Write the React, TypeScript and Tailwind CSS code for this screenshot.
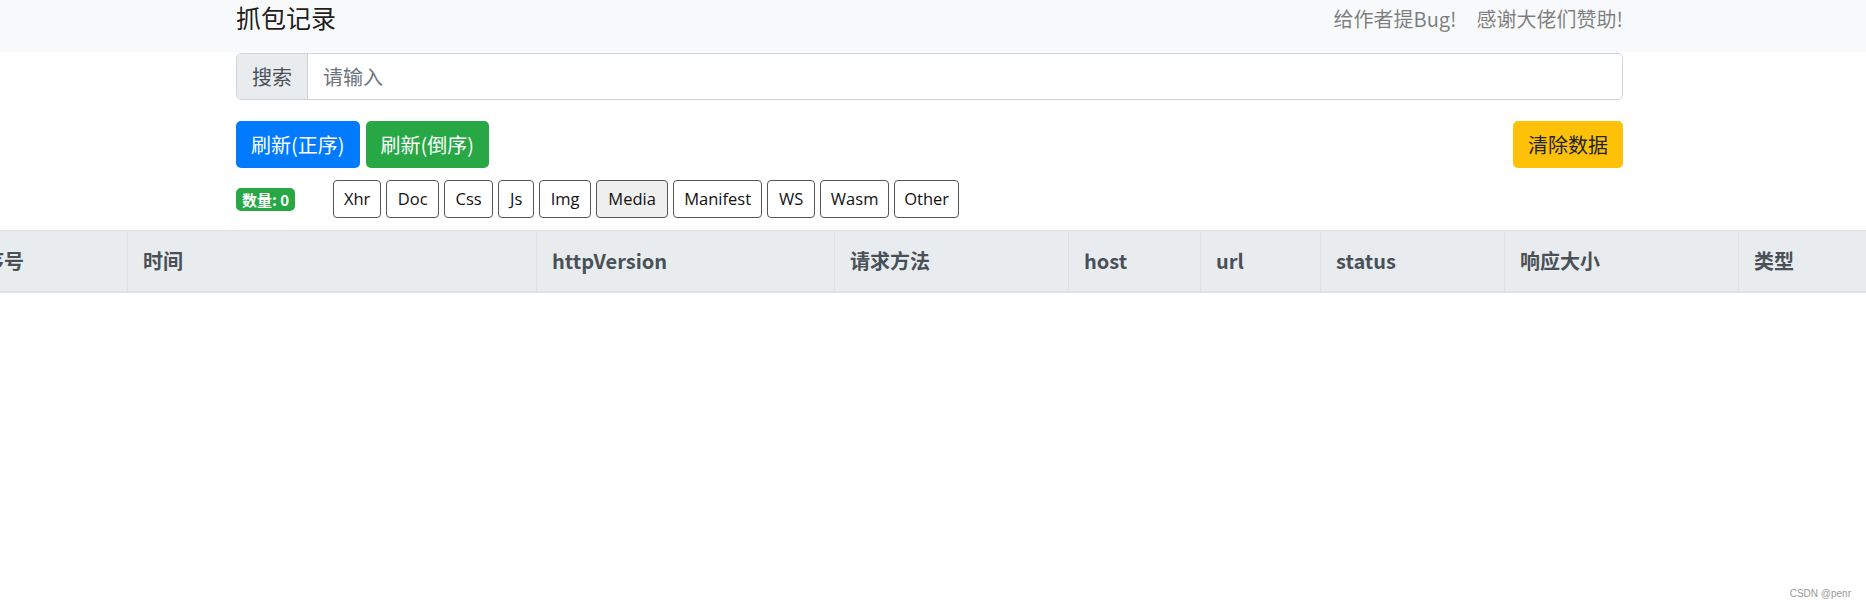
const filters = [
    { label: 'Xhr', w: 'w-[48px]', active: false },
    { label: 'Doc', w: 'w-[53px]', active: false },
    { label: 'Css', w: 'w-[49px]', active: false },
    { label: 'Js', w: 'w-[36px]', active: false },
    { label: 'Img', w: 'w-[52px]', active: false },
    { label: 'Media', w: 'w-[72px]', active: true },
    { label: 'Manifest', w: 'w-[89px]', active: false },
    { label: 'WS', w: 'w-[48px]', active: false },
    { label: 'Wasm', w: 'w-[69px]', active: false },
    { label: 'Other', w: 'w-[65px]', active: false }
];

const columns = [
    { label: '序号', w: 'w-[159px]' },
    { label: '时间', w: 'w-[409px]' },
    { label: 'httpVersion', w: 'w-[298px]' },
    { label: '请求方法', w: 'w-[234px]' },
    { label: 'host', w: 'w-[132px]' },
    { label: 'url', w: 'w-[120px]' },
    { label: 'status', w: 'w-[184px]' },
    { label: '响应大小', w: 'w-[234px]' },
    { label: '类型', w: 'w-[160px]' }
];

export default function App() {
    return (
        <div className="relative w-full min-h-[612px] overflow-hidden bg-white text-[#212529] font-['Noto_Sans_CJK_SC','Noto_Sans',sans-serif]">
            {/* Navbar */}
            <nav className="h-[52px] bg-[#f8f9fa]">
                <div className="w-[1387px] ml-[236px] flex justify-between items-start">
                    <div className="text-[25px] leading-[34px] text-black/90">抓包记录</div>
                    <div className="flex gap-[20px] pt-[4px] text-[20px] leading-[30px] text-black/50">
                        <a>给作者提Bug!</a>
                        <a>感谢大佬们赞助!</a>
                    </div>
                </div>
            </nav>

            <div className="w-[1387px] ml-[236px]">
                {/* Search */}
                <div className="mt-[1px] h-[47px] flex border border-[#ced4da] rounded-[5px] overflow-hidden text-[20px]">
                    <div className="px-[15px] flex items-center bg-[#e9ecef] border-r border-[#ced4da] text-[#495057]">搜索</div>
                    <div className="flex-1 px-[15px] flex items-center text-[#6c757d]">请输入</div>
                </div>

                {/* Actions */}
                <div className="mt-[21px] flex justify-between">
                    <div className="flex gap-[6px]">
                        <button className="h-[47px] px-[15px] rounded-[5px] bg-[#007bff] text-white text-[20px]">刷新(正序)</button>
                        <button className="h-[47px] px-[15px] rounded-[5px] bg-[#28a745] text-white text-[20px]">刷新(倒序)</button>
                    </div>
                    <button className="h-[47px] px-[15px] rounded-[5px] bg-[#ffc107] text-[#212529] text-[20px]">清除数据</button>
                </div>

                {/* Filters */}
                <div className="mt-[12px] h-[38px] flex items-center">
                    <span className="h-[23px] px-[6px] flex items-center rounded-[5px] bg-[#28a745] text-white text-[15px] font-bold leading-none">数量: 0</span>
                    <div className="ml-[38px] flex gap-[5px]">
                        {filters.map((f) => (
                            <button
                                key={f.label}
                                className={`${f.w} h-[38px] flex items-center justify-center border border-[#555] rounded-[4px] font-['Open_Sans',sans-serif] text-[16.5px] text-[#111] ${f.active ? 'bg-[#efefef]' : 'bg-white'}`}
                            >
                                {f.label}
                            </button>
                        ))}
                    </div>
                </div>
            </div>

            {/* Table */}
            <table className="mt-[12px] ml-[-32px] w-[1930px] table-fixed border-collapse">
                <thead>
                    <tr>
                        {columns.map((c) => (
                            <th
                                key={c.label}
                                className={`${c.w} px-[15px] py-[15px] text-left align-bottom text-[20px] leading-[30px] font-bold text-[#495057] bg-[#e9ecef] border border-[#dee2e6] border-b-2`}
                            >
                                {c.label}
                            </th>
                        ))}
                    </tr>
                </thead>
                <tbody></tbody>
            </table>

            <div className="absolute right-[15px] bottom-[11px] text-[10px] text-[#999] font-['Liberation_Sans',sans-serif]">CSDN @penr</div>
        </div>
    );
}
